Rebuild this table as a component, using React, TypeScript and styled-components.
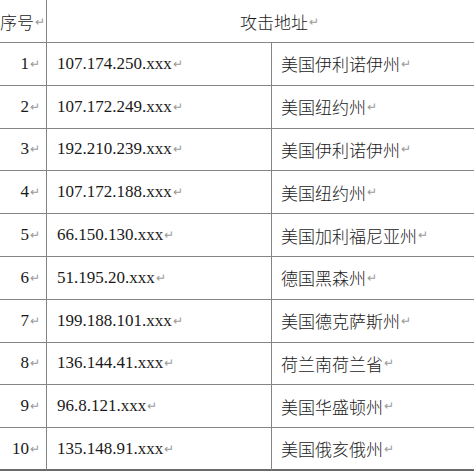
import React from "react";
import styled, { createGlobalStyle } from "styled-components";

const rows = [
  { ip: "107.174.250.xxx", place: "美国伊利诺伊州" },
  { ip: "107.172.249.xxx", place: "美国纽约州" },
  { ip: "192.210.239.xxx", place: "美国伊利诺伊州" },
  { ip: "107.172.188.xxx", place: "美国纽约州" },
  { ip: "66.150.130.xxx", place: "美国加利福尼亚州" },
  { ip: "51.195.20.xxx", place: "德国黑森州" },
  { ip: "199.188.101.xxx", place: "美国德克萨斯州" },
  { ip: "136.144.41.xxx", place: "荷兰南荷兰省" },
  { ip: "96.8.121.xxx", place: "美国华盛顿州" },
  { ip: "135.148.91.xxx", place: "美国俄亥俄州" },
];

const GlobalStyle = createGlobalStyle`
  html, body {
    margin: 0;
    padding: 0;
    background: #fff;
    overflow: hidden;
  }
`;

export default function App() {
  return (
    <>
      <GlobalStyle />
      <Page>
        <Table>
          <NoHead>
            序号
            <Mark>↵</Mark>
          </NoHead>
          <TitleHead>
            攻击地址
            <Mark>↵</Mark>
          </TitleHead>

          {rows.map((row, i) => {
            const last = i === rows.length - 1;
            return (
              <React.Fragment key={i}>
                <NoCell $last={last}>
                  {i + 1}
                  <Mark>↵</Mark>
                </NoCell>
                <IpCell $last={last}>
                  {row.ip}
                  <Mark>↵</Mark>
                </IpCell>
                <PlaceCell $last={last}>
                  {row.place}
                  <Mark>↵</Mark>
                </PlaceCell>
              </React.Fragment>
            );
          })}
        </Table>
      </Page>
    </>
  );
}

const Page = styled.div`
  width: 474px;
  height: 474px;
  overflow: hidden;
  background: #fff;
`;

const Table = styled.div`
  width: 510px;
  display: grid;
  grid-template-columns: 47px 225px 1fr;
  grid-template-rows: 43px repeat(10, 42.8px);

  font-family: "Liberation Serif", "Noto Sans CJK SC", serif;
  font-size: 17px;
  font-weight: 300;
  color: #1a1a1a;
`;

const Cell = styled.div<{ $last?: boolean }>`
  box-sizing: border-box;
  display: flex;
  align-items: center;
  white-space: nowrap;
  border-bottom: ${(p) =>
    p.$last ? "2.5px solid #6a6a6a" : "1.5px solid #858585"};
`;

const NoHead = styled(Cell)`
  border-right: 1.5px solid #858585;
  padding-top: 1px;
`;

const TitleHead = styled(Cell)`
  grid-column: span 2;
  justify-content: center;
  padding-top: 1px;
  padding-left: 2px;
`;

const NoCell = styled(Cell)`
  justify-content: flex-end;
  padding-right: 6px;
  border-right: 1.5px solid #858585;
`;

const IpCell = styled(Cell)`
  padding-left: 10px;
  border-right: 1.5px solid #858585;
`;

const PlaceCell = styled(Cell)`
  padding-left: 9px;
`;

const Mark = styled.span`
  font-family: "DejaVu Sans", sans-serif;
  font-size: 12px;
  color: #9a9a9a;
  margin-left: 1px;
`;
